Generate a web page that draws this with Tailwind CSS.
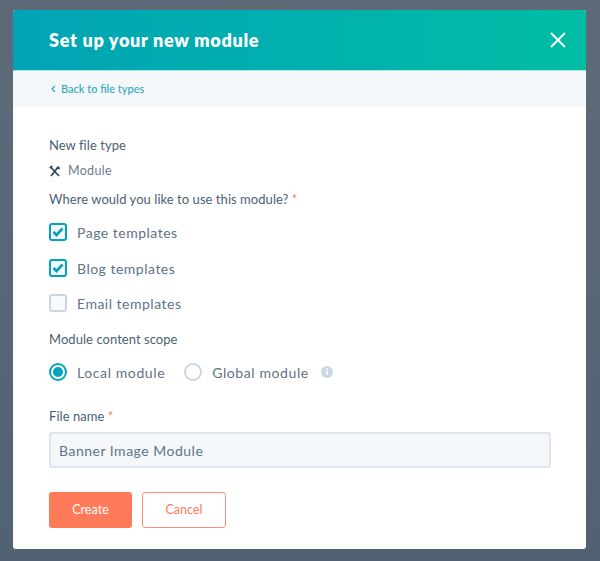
<!DOCTYPE html>
<html lang="en">
<head>
    <meta charset="UTF-8">
    <title>Set up your new module</title>
    <script src="https://cdn.jsdelivr.net/npm/@tailwindcss/browser@4"></script>
</head>
<body>
<div class="w-[600px] h-[561px] overflow-hidden bg-gradient-to-b from-[#5e6a78] to-[#516272] pt-[10px] pl-[13px] font-['Lato',sans-serif] text-[#516f90]">
    <div class="w-[573px] h-[539px] bg-white rounded-[3px] overflow-hidden flex flex-col">
        <!-- Header -->
        <div class="h-[60px] shrink-0 flex items-center justify-between pl-[36px] pr-[19px] bg-gradient-to-r from-[#00a4b5] to-[#00bda5] border-b border-[#b4e4e4] box-content">
            <h1 class="text-[18px] font-extrabold text-white tracking-[0.7px]">Set up your new module</h1>
            <svg class="w-[18px] h-[18px]" viewBox="0 0 18 18" fill="none" stroke="white" stroke-width="2">
                <path d="M2 2l14 14M16 2L2 16"/>
            </svg>
        </div>

        <!-- Back link -->
        <div class="h-[36px] shrink-0 bg-[#f5f8fa] flex items-center pl-[38px] gap-[5px] text-[11px] font-medium text-[#2fa8bb]">
            <svg class="w-[5px] h-[8px]" viewBox="0 0 5 8" fill="none" stroke="currentColor" stroke-width="1.2">
                <path d="M4 1L1 4l3 3"/>
            </svg>
            <a href="#">Back to file types</a>
        </div>

        <!-- Form -->
        <div class="pl-[36px] pr-[35px] text-[13px] tracking-[0.05px]">
            <div class="mt-[29px] leading-[18px] text-[#4b5f75]">New file type</div>
            <div class="mt-[8px] flex items-center gap-[7px] leading-[18px] text-[12.5px] tracking-[0.3px] text-[#6b7c8e]">
                <svg class="w-[12px] h-[12px]" viewBox="0 0 12 12" fill="none" stroke="#33475b" stroke-width="1.8">
                    <path d="M2 2.5l8 8.5M9.5 1.5L2 11M0.8 3.2L3.2 1M8.2 2.8l2.8 0.6"/>
                </svg>
                Module
            </div>
            <div class="mt-[10px] leading-[18px] text-[#4b5f75]">Where would you like to use this module? <span class="text-[#ff7a59]">*</span></div>

            <div class="mt-[15px] flex flex-col gap-[18px] text-[14px] tracking-[0.5px] text-[#5f7388]">
                <label class="h-[18px] flex items-center gap-[10px]">
                    <span class="w-[18px] h-[18px] rounded-[3px] border-2 border-[#00a4bd] bg-[#f5f8fa] flex items-center justify-center">
                        <svg class="w-[12px] h-[10px]" viewBox="0 0 12 10" fill="none" stroke="#00a4bd" stroke-width="2.6"><path d="M1.5 5l3 3 6-6.5"/></svg>
                    </span>
                    Page templates
                </label>
                <label class="h-[18px] flex items-center gap-[10px]">
                    <span class="w-[18px] h-[18px] rounded-[3px] border-2 border-[#00a4bd] bg-[#f5f8fa] flex items-center justify-center">
                        <svg class="w-[12px] h-[10px]" viewBox="0 0 12 10" fill="none" stroke="#00a4bd" stroke-width="2.6"><path d="M1.5 5l3 3 6-6.5"/></svg>
                    </span>
                    Blog templates
                </label>
                <label class="h-[18px] -mt-[0.6px] flex items-center gap-[10px]">
                    <span class="w-[18px] h-[18px] rounded-[3px] border-2 border-[#cbd6e2] bg-[#f9fafc]"></span>
                    Email templates
                </label>
            </div>

            <div class="mt-[17.6px] leading-[18px] text-[#4b5f75]">Module content scope</div>

            <div class="mt-[15px] h-[18px] flex items-center text-[14px] tracking-[0.6px] text-[#5f7388]">
                <span class="w-[18px] h-[18px] rounded-full border-2 border-[#00a4bd] flex items-center justify-center">
                    <span class="w-[10px] h-[10px] rounded-full bg-[#00a4bd]"></span>
                </span>
                <span class="ml-[10px]">Local module</span>
                <span class="ml-[19px] w-[18px] h-[18px] rounded-full border-2 border-[#cbd6e2] bg-white"></span>
                <span class="ml-[10px]">Global module</span>
                <svg class="ml-[12px] w-[12px] h-[12px]" viewBox="0 0 12 12">
                    <circle cx="6" cy="6" r="6" fill="#cbd6e2"/>
                    <circle cx="6" cy="3.2" r="1" fill="white"/>
                    <path d="M5 5.2h1.8v3.6h-1.8z" fill="white"/>
                </svg>
            </div>

            <div class="mt-[26px] leading-[18px] text-[#4b5f75]">File name <span class="text-[#ff7a59]">*</span></div>
            <input type="text" value="Banner Image Module" class="block mt-[7px] w-full h-[36px] px-[8px] pt-[1px] rounded-[3px] border-2 border-[#dfe5ed] bg-[#f5f8fa] text-[14px] tracking-[0.5px] text-[#5f7388]">

            <div class="mt-[24px] flex gap-[10px]">
                <button class="w-[83px] h-[36px] rounded-[3px] bg-[#ff7a59] text-white text-[12.5px]">Create</button>
                <button class="w-[84px] h-[36px] rounded-[3px] border border-[#ff8f73] bg-white text-[#ff7a59] text-[12.5px]">Cancel</button>
            </div>
        </div>
    </div>
</div>
</body>
</html>
